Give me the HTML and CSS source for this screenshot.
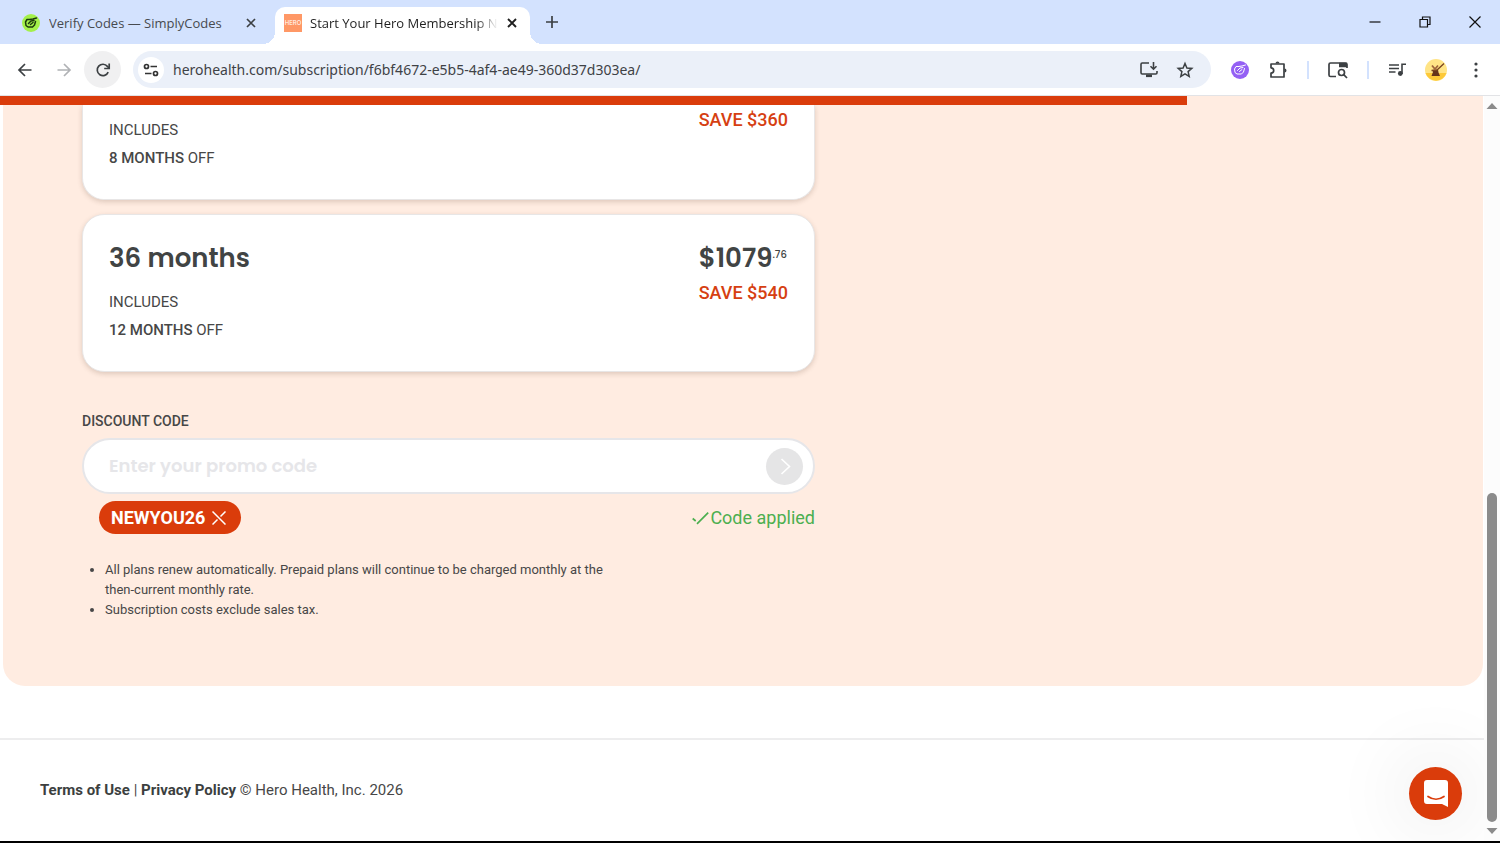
FILE: index.html
```html
<!DOCTYPE html>
<html lang="en">
<head>
<meta charset="utf-8">
<title>Start Your Hero Membership Now</title>
<link rel="stylesheet" href="styles.css">
</head>
<body>
<div class="browser">
  <header class="tabstrip">
    <div class="tab tab-idle">
      <svg class="favicon" viewBox="0 0 18 18"><circle cx="9" cy="9" r="9" fill="#a4f04a"/><path d="M8 5.500H5L3.500 8l.5 3.500L6 13h4.500l2-2 1-3.500M7.500 5.500l3.500-.5 3.500-1M6.500 9.500L9 7l3-.5M8.500 10.500l2.500-2" fill="none" stroke="#1c3a0c" stroke-width="1.500" stroke-linecap="round" stroke-linejoin="round"/></svg>
      <span class="tab-title">Verify Codes — SimplyCodes</span>
      <button class="icon-btn tab-close" aria-label="Close tab"><svg width="10" height="10" viewBox="0 0 10 10"><path d="M1 1l8 8M9 1l-8 8" stroke="#3c4043" stroke-width="1.700"/></svg></button>
    </div>
    <div class="tab tab-active">
      <span class="favicon hero-icon">HERO</span>
      <span class="tab-title">Start Your Hero Membership Now</span>
      <button class="icon-btn tab-close" aria-label="Close tab"><svg width="10" height="10" viewBox="0 0 10 10"><path d="M1 1l8 8M9 1l-8 8" stroke="#1f1f1f" stroke-width="1.900"/></svg></button>
    </div>
    <button class="icon-btn new-tab" aria-label="New tab"><svg width="12" height="12" viewBox="0 0 12 12"><path d="M6 0v12M0 6h12" stroke="#3c4043" stroke-width="1.700"/></svg></button>
    <div class="window-controls">
      <button class="icon-btn" aria-label="Minimize"><svg width="12" height="12" viewBox="0 0 12 12"><path d="M.5 6h11" stroke="#111" stroke-width="1.200"/></svg></button>
      <button class="icon-btn" aria-label="Restore"><svg width="12" height="12" viewBox="0 0 12 12"><path d="M1 3.500h7.500V11H1zM3.500 3.500V1H11v7.500H8.500" fill="none" stroke="#111" stroke-width="1.200"/></svg></button>
      <button class="icon-btn" aria-label="Close window"><svg width="12" height="12" viewBox="0 0 12 12"><path d="M.5.5l11 11M11.500.5l-11 11" stroke="#111" stroke-width="1.200"/></svg></button>
    </div>
  </header>

  <nav class="toolbar">
    <button class="icon-btn nav-btn" aria-label="Back"><svg width="16" height="16" viewBox="0 0 16 16"><path d="M14.500 8H2.500M8 2L2 8l6 6" fill="none" stroke="#3c4043" stroke-width="1.700"/></svg></button>
    <button class="icon-btn nav-btn" aria-label="Forward"><svg width="16" height="16" viewBox="0 0 16 16"><path d="M1.500 8h12M8 2l6 6-6 6" fill="none" stroke="#b0b2b5" stroke-width="1.700"/></svg></button>
    <button class="icon-btn nav-btn nav-hover" aria-label="Reload"><svg width="16" height="16" viewBox="0 0 16 16"><path d="M13.200 10.200A5.700 5.700 0 1 1 12.400 4.400L14 6" fill="none" stroke="#3c4043" stroke-width="1.700"/><path d="M14.200 1.500v5H9.200" fill="none" stroke="#3c4043" stroke-width="1.700"/></svg></button>
    <div class="omnibox">
      <button class="icon-btn site-info" aria-label="Site information"><svg width="16" height="16" viewBox="0 0 16 16" fill="none" stroke="#333" stroke-width="1.700"><circle cx="3.500" cy="4.500" r="2"/><path d="M7.500 4.500H14M2 11.500h6.500"/><circle cx="12.500" cy="11.500" r="2"/></svg></button>
      <input class="url" type="text" aria-label="Address" value="herohealth.com/subscription/f6bf4672-e5b5-4af4-ae49-360d37d303ea/">
      <button class="icon-btn" aria-label="Install app"><svg width="18" height="18" viewBox="0 0 18 18" fill="none" stroke="#3c4043" stroke-width="1.600"><path d="M9 2H2.200Q1 2 1 3.200v8.600Q1 13 2.200 13h13.600Q17 13 17 11.800V10"/><path d="M13.500 1v7M10.500 5.200l3 3 3-3"/><path d="M6 14.800h6" stroke-width="2.600"/></svg></button>
      <button class="icon-btn" aria-label="Bookmark this page"><svg width="18" height="18" viewBox="0 0 18 18"><path d="M9 2.500l1.900 4.500 4.900.4-3.700 3.200 1.100 4.800L9 12.900l-4.200 2.500 1.100-4.800L2.200 7.400 7.100 7z" fill="none" stroke="#3c4043" stroke-width="1.500"/></svg></button>
    </div>
    <div class="extensions">
      <button class="icon-btn" aria-label="SimplyCodes"><svg width="18" height="18" viewBox="0 0 18 18"><circle cx="9" cy="9" r="9" fill="#9460f4"/><path d="M8 5.500H5L3.500 8l.5 3.500L6 13h4.500l2-2 1-3.500M7.500 5.500l3.500-.5 3.500-1M6.500 9.500L9 7l3-.5M8.500 10.500l2.500-2" fill="none" stroke="#fff" stroke-width="1" stroke-linecap="round" stroke-linejoin="round"/></svg></button>
      <button class="icon-btn" aria-label="Extensions"><svg width="20" height="20" viewBox="0 0 20 20"><path d="M3 4h13v13H3v-3.800c3.600-.3 3.600-5.100 0-5.400z" fill="none" stroke="#3c4043" stroke-width="1.700" stroke-linejoin="round"/><path d="M7.500 3.500a2 2 0 0 1 4 0zM16.500 8.500a2 2 0 0 1 0 4z" fill="#3c4043"/></svg></button>
      <span class="divider"></span>
      <button class="icon-btn" aria-label="Search side panel"><svg width="20" height="18" viewBox="0 0 20 18" fill="none" stroke="#3c4043" stroke-width="1.700"><path d="M8 15.500H2.500Q1 15.500 1 14V3.500Q1 2 2.500 2h15Q19 2 19 3.500V7"/><path d="M11 4h8" stroke-width="4.500"/><circle cx="13.500" cy="11.500" r="3"/><path d="M15.700 13.700l3.300 3.300"/></svg></button>
      <span class="divider"></span>
      <button class="icon-btn" aria-label="Media controls"><svg width="18" height="16" viewBox="0 0 18 16"><path d="M1 3h10M1 6.500h10M1 10h6.500M14 12V2.200h4" fill="none" stroke="#3c4043" stroke-width="1.600"/><circle cx="12.300" cy="11.500" r="2.400" fill="#3c4043"/></svg></button>
      <button class="icon-btn" aria-label="Profile"><svg width="22" height="22" viewBox="0 0 22 22"><circle cx="11" cy="11" r="11" fill="#ffe486"/><path d="M.5 14h21a11 11 0 0 1-21 0z" fill="#fdc938"/><path d="M6.500 17l1.500-4-1-2 6-.5.5 3 1.500 3.500z" fill="#67351b"/><path d="M6.500 11.500l5.500-.5 7-6.500" fill="none" stroke="#7a4420" stroke-width="1.300"/><path d="M7 6.500l3 3.500 3-3.500" fill="none" stroke="#a0653a" stroke-width="1.800"/></svg></button>
      <button class="icon-btn menu-btn" aria-label="Menu"><svg width="4" height="16" viewBox="0 0 4 16" fill="#3c4043"><circle cx="2" cy="2" r="1.600"/><circle cx="2" cy="8" r="1.600"/><circle cx="2" cy="14" r="1.600"/></svg></button>
    </div>
  </nav>

  <div class="viewport">
    <div class="page">
      <div class="progress"></div>
      <main class="plans">
        <div class="column">
          <section class="card card-scrolled">
            <div class="details">
              <p>INCLUDES</p>
              <p><b>8 MONTHS</b> OFF</p>
            </div>
            <p class="save">SAVE $360</p>
          </section>
          <section class="card">
            <div class="details">
              <h2 class="heading">36 months</h2>
              <p>INCLUDES</p>
              <p><b>12 MONTHS</b> OFF</p>
            </div>
            <div class="pricing">
              <div class="heading">$1079<sup>.76</sup></div>
              <p class="save">SAVE $540</p>
            </div>
          </section>

          <label class="promo-label" for="promo">DISCOUNT CODE</label>
          <div class="promo-field">
            <input id="promo" class="promo-input" type="text" placeholder="Enter your promo code">
            <button class="icon-btn promo-submit" aria-label="Apply code"><svg width="37" height="37" viewBox="0 0 37 37"><path d="M15.500 11l8 7.500-8 7.500" fill="none" stroke="#fff" stroke-width="1.600"/></svg></button>
          </div>
          <div class="promo-status">
            <button class="chip">NEWYOU26<svg width="14" height="14" viewBox="0 0 14 14"><path d="M.5.5l13 13M13.500.5l-5 5M5.500 8.500l-5 5" stroke="#fff" stroke-width="1.500"/></svg></button>
            <span class="applied"><svg width="17" height="14" viewBox="0 0 17 14"><path d="M.7 7.500l3 2.500M5 12.800L16.200 1.700" fill="none" stroke="#4caf50" stroke-width="1.700"/></svg>Code applied</span>
          </div>
          <ul class="terms">
            <li>All plans renew automatically. Prepaid plans will continue to be charged monthly at the then-current monthly rate.</li>
            <li>Subscription costs exclude sales tax.</li>
          </ul>
        </div>
      </main>
      <footer class="footer">
        <a href="#terms">Terms of Use</a> | <a href="#privacy">Privacy Policy</a> © Hero Health, Inc. 2026
      </footer>
      <button class="icon-btn chat" aria-label="Open chat"><svg width="24" height="27" viewBox="0 0 24 27"><path d="M3 0h18a3 3 0 0 1 3 3v24l-6-3H3a3 3 0 0 1-3-3V3a3 3 0 0 1 3-3z" fill="#fff"/><path d="M4 16.500q8 5.500 16 0" fill="none" stroke="#da3c0b" stroke-width="1.700" stroke-linecap="round"/></svg></button>
    </div>
    <div class="scrollbar">
      <svg width="12" height="6" viewBox="0 0 12 6"><path d="M6 0l5.500 6H.5z" fill="#8b8b8b"/></svg>
      <div class="thumb"></div>
      <svg width="12" height="6" viewBox="0 0 12 6"><path d="M6 6L.5 0h11z" fill="#8b8b8b"/></svg>
    </div>
  </div>
</div>
</body>
</html>
```
FILE: styles.css
```css
* { box-sizing: border-box; }

body {
  margin: 0;
  font-family: Roboto, "Liberation Sans", sans-serif;
  color: #474747;
  background: #fff;
}

h2, p, ul { margin: 0; }

.browser {
  display: flex;
  flex-direction: column;
  height: 100vh;
  overflow: hidden;
  border-bottom: 2px solid #000;
}

.icon-btn {
  display: inline-flex;
  align-items: center;
  justify-content: center;
  flex: none;
  padding: 0;
  border: 0;
  background: none;
}

/* Tab strip */
.tabstrip {
  display: flex;
  flex: none;
  height: 44px;
  padding-top: 7px;
  background: #d3e2fe;
  font-family: "Segoe UI", "Open Sans", sans-serif;
  font-size: 13px;
  line-height: 18px;
}

.tab {
  display: flex;
  align-items: center;
  padding: 0 13px 5px 9px;
}

.tab-idle {
  width: 275px;
  padding: 0 19px 5px 22px;
  color: #474a4f;
}

.tab-active {
  position: relative;
  width: 255px;
  border-radius: 10px 10px 0 0;
  background: #fff;
  color: #1f1f1f;
}

/* Flared feet where the active tab meets the toolbar */
.tab-active::before,
.tab-active::after {
  content: "";
  position: absolute;
  bottom: 0;
  width: 12px;
  height: 12px;
}

.tab-active::before {
  left: -12px;
  background: radial-gradient(circle at 0 0, #d3e2fe 12px, #fff 12px);
}

.tab-active::after {
  right: -12px;
  background: radial-gradient(circle at 100% 0, #d3e2fe 12px, #fff 12px);
}

.favicon {
  flex: none;
  width: 18px;
  height: 18px;
  margin-right: 9px;
}

.tab-active .favicon { margin-right: 8px; }

.hero-icon {
  background: #ff9866;
  color: #fff;
  font: 6px/18px Inter, sans-serif;
  text-align: center;
}

.tab-title {
  flex: 1;
  overflow: hidden;
  white-space: nowrap;
}

.tab-active .tab-title {
  margin-right: 9px;
  -webkit-mask-image: linear-gradient(90deg, #000 88%, transparent);
  mask-image: linear-gradient(90deg, #000 88%, transparent);
}

.new-tab { margin: 0 16px 7px; }

.window-controls {
  display: flex;
  gap: 38px;
  margin: 0 19px 7px auto;
}

/* Toolbar */
.toolbar {
  display: flex;
  align-items: center;
  flex: none;
  height: 52px;
  padding: 0 22px 0 6px;
  border-bottom: 1px solid #e2e3e6;
  background: #fff;
}

.nav-btn {
  width: 37px;
  height: 37px;
  margin-right: 2px;
  border-radius: 50%;
}

.nav-hover {
  margin-right: 12px;
  background: #f0f0f1;
}

.omnibox {
  display: flex;
  align-items: center;
  flex: 1;
  gap: 18px;
  height: 37px;
  padding: 0 17px 0 5px;
  border-radius: 19px;
  background: #ebf0f9;
}

.site-info {
  width: 26px;
  height: 26px;
  border-radius: 50%;
  background: #fff;
}

.url {
  flex: 1;
  min-width: 0;
  margin-left: -9px;
  padding: 0;
  border: 0;
  outline: 0;
  background: none;
  color: #3f4246;
  font: 14px/20px "Segoe UI", "Noto Sans", sans-serif;
}

.extensions {
  display: flex;
  align-items: center;
  gap: 19px;
  margin-left: 20px;
}

.menu-btn { margin-left: 8px; }

.divider {
  width: 2px;
  height: 18px;
  background: #d3e2fe;
}

/* Page */
.viewport {
  display: flex;
  flex: 1;
  min-height: 0;
}

.page {
  position: relative;
  flex: 1;
  overflow: hidden;
}

.progress {
  position: absolute;
  top: 0;
  left: 0;
  width: 80%;
  height: 9px;
  background: #da3c0b;
}

.plans {
  margin: 0 1px 0 3px;
  padding: 9px 79px 66px;
  border-radius: 0 0 22px 22px;
  background: #ffece1;
}

.column { max-width: 733px; }

.card {
  display: flex;
  justify-content: space-between;
  margin-bottom: 14px;
  padding: 25px 26px 27px;
  border: 1px solid #e8e6e6;
  border-radius: 22px;
  background: #fff;
  box-shadow: 0 2px 5px rgba(90, 60, 40, 0.2);
  font-size: 15px;
  line-height: 28px;
}

.card-scrolled {
  padding-top: 0;
  border-top: 0;
  border-radius: 0 0 22px 22px;
}

.card-scrolled .details { margin-top: 11px; }

.card b { font-weight: 500; }

.heading {
  margin-bottom: 12px;
  font: 600 26px/36px Poppins, Inter, sans-serif;
  color: #414444;
}

.heading sup {
  font-size: 10px;
  font-weight: 500;
  line-height: 10px;
  vertical-align: 9px;
}

.pricing .heading { margin-bottom: 2px; }

.save {
  color: #d63f12;
  font-size: 18px;
  font-weight: 500;
  line-height: 30px;
  text-align: right;
}

.promo-label {
  display: block;
  margin: 39px 0 7px;
  font-size: 14px;
  font-weight: 500;
  line-height: 20px;
}

.promo-field {
  display: flex;
  align-items: center;
  height: 56px;
  padding: 0 10px 0 25px;
  border: 2px solid #e6e6e9;
  border-radius: 28px;
  background: #fff;
}

.promo-input {
  flex: 1;
  min-width: 0;
  padding: 0;
  border: 0;
  outline: 0;
  background: none;
  font: 600 18px/28px Poppins, Inter, sans-serif;
}

.promo-input::placeholder {
  color: #e6e6e9;
  opacity: 1;
}

.promo-submit {
  width: 37px;
  height: 37px;
  border-radius: 50%;
  background: #e5e5e6;
}

.promo-status {
  display: flex;
  align-items: center;
  justify-content: space-between;
  padding: 7px 0 0 17px;
}

.chip {
  display: flex;
  align-items: center;
  gap: 7px;
  height: 33px;
  padding: 0 15px 0 12px;
  border: 0;
  border-radius: 17px;
  background: #da3c0b;
  color: #fff;
  font: 700 18px/33px Roboto, sans-serif;
}

.applied {
  display: flex;
  align-items: center;
  gap: 1px;
  color: #4caf50;
  font-size: 18px;
  line-height: 24px;
}

.terms {
  max-width: 540px;
  margin-top: 26px;
  padding-left: 23px;
  font-size: 13px;
  line-height: 20px;
}

.footer {
  margin-top: 52px;
  padding: 38px 40px;
  border-top: 2px solid #ededee;
  font-size: 15px;
  line-height: 24px;
}

.footer a {
  color: #3c3f3f;
  font-weight: 700;
  text-decoration: none;
}

.chat {
  position: absolute;
  right: 22px;
  bottom: 21px;
  width: 53px;
  height: 53px;
  border-radius: 50%;
  background: #da3c0b;
  box-shadow: 0 0 70px 20px rgba(0, 0, 0, 0.05);
}

/* Scrollbar */
.scrollbar {
  display: flex;
  flex-direction: column;
  align-items: center;
  flex: none;
  width: 16px;
  padding: 7px 0;
  background: #fcfcfc;
}

.thumb {
  width: 10px;
  height: 329px;
  margin: auto 0 6px;
  border-radius: 5px;
  background: #8b8b8b;
}
```
